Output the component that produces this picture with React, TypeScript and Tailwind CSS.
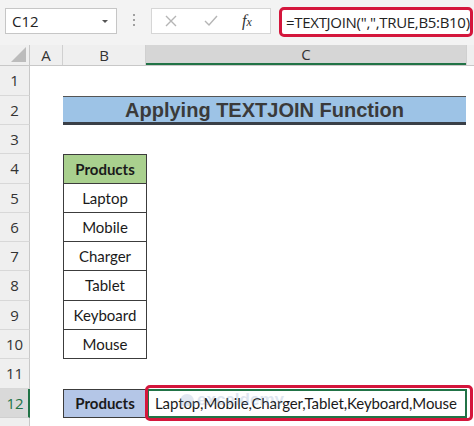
import React from "react";

const ROWS: { n: number; h: string }[] = [
  { n: 1, h: "h-[30px]" },
  { n: 2, h: "h-[29px]" },
  { n: 3, h: "h-[29px]" },
  { n: 4, h: "h-[30px]" },
  { n: 5, h: "h-[29px]" },
  { n: 6, h: "h-[29px]" },
  { n: 7, h: "h-[29px]" },
  { n: 8, h: "h-[30px]" },
  { n: 9, h: "h-[29px]" },
  { n: 10, h: "h-[29px]" },
  { n: 11, h: "h-[30px]" },
  { n: 12, h: "h-[29px]" },
];

const PRODUCTS: Record<number, string> = {
  5: "Laptop",
  6: "Mobile",
  7: "Charger",
  8: "Tablet",
  9: "Keyboard",
  10: "Mouse",
};

const cellFont = "font-['Lato','Open_Sans',sans-serif] text-[15px] text-[#1a1a1a]";

function RowHeader({ n }: { n?: number }) {
  const active = n === 12;
  return (
    <div
      className={
        active
          ? "w-[30px] shrink-0 flex items-center justify-center bg-[#d9d9d9] border-r-2 border-r-[#217346] border-b border-b-[#d0d0d0] text-[#217346] text-[15px] pl-[2px]"
          : "w-[30px] shrink-0 flex items-center justify-center bg-[#efefef] border-r border-r-[#c8c8c8] border-b border-b-[#d8d8d8] text-[#333] text-[15px]"
      }
    >
      {n}
    </div>
  );
}

function BodyRow({ n, h }: { n: number; h: string }) {
  let content: React.ReactNode = null;
  if (n === 2) {
    content = (
      <div className="w-[403px] h-full bg-[#9dc3e6] border-t border-t-[#555] border-b-[3px] border-b-[#3a3f47] flex items-center justify-center font-['Liberation_Sans',Arial,sans-serif] font-bold text-[20px] text-[#3a3a3a]">
        Applying TEXTJOIN Function
      </div>
    );
  } else if (n === 4) {
    content = (
      <div className={`w-[84px] h-full bg-[#a9d08e] border border-[#3c3c3c] flex items-center justify-center font-bold ${cellFont}`}>
        Products
      </div>
    );
  } else if (PRODUCTS[n]) {
    content = (
      <div className={`w-[84px] h-full border-x border-b border-[#3c3c3c] flex items-center justify-center ${cellFont}`}>
        {PRODUCTS[n]}
      </div>
    );
  } else if (n === 12) {
    content = (
      <>
        <div className={`w-[84px] h-full bg-[#b4c6e7] border border-[#3c3c3c] flex items-center justify-center font-bold ${cellFont}`}>
          Products
        </div>
        <div className={`w-[320px] h-full border-2 border-[#217346] flex items-center pl-[6px] ${cellFont} tracking-[-0.1px] whitespace-nowrap`}>
          Laptop,Mobile,Charger,Tablet,Keyboard,Mouse
        </div>
      </>
    );
  }
  return (
    <div className={`flex ${h}`}>
      <RowHeader n={n} />
      <div className="w-[33px] shrink-0" />
      <div className="flex items-stretch">{content}</div>
    </div>
  );
}

export default function App() {
  return (
    <div className="relative w-[474px] h-[426px] overflow-hidden bg-white font-['Open_Sans','Liberation_Sans',sans-serif]">
      {/* formula bar */}
      <div className="h-[45px] bg-[#f3f3f3] flex items-start pt-[8px]">
        <div className="ml-[5px] w-[112px] h-[26px] bg-white border border-[#c6c6c6] flex items-center justify-between pl-[6px] pr-[8px]">
          <span className="text-[15px] text-[#222]">C12</span>
          <span className="w-0 h-0 border-l-[3px] border-r-[3px] border-t-[3px] border-l-transparent border-r-transparent border-t-[#555]" />
        </div>
        <div className="ml-[16px] mt-[6px] flex flex-col gap-[3px]">
          <span className="w-[2px] h-[2px] bg-[#a0a0a0]" />
          <span className="w-[2px] h-[2px] bg-[#a0a0a0]" />
          <span className="w-[2px] h-[2px] bg-[#a0a0a0]" />
        </div>
        <div className="ml-[16px] w-[120px] h-[26px] bg-white border border-[#d6d6d6] flex items-center">
          <svg className="ml-[12px]" width="14" height="14" viewBox="0 0 14 14">
            <path d="M2 2 L12 12 M12 2 L2 12" stroke="#b5b5b5" strokeWidth="1.4" fill="none" />
          </svg>
          <svg className="ml-[26px]" width="14" height="12" viewBox="0 0 14 12">
            <path d="M1 6 L5 10 L13 1" stroke="#b5b5b5" strokeWidth="1.4" fill="none" />
          </svg>
          <span className="ml-[24px] font-['Liberation_Serif',serif] italic text-[16px] text-[#333]">
            f<span className="text-[12px]">x</span>
          </span>
        </div>
        <div className="ml-[8px] w-[194px] h-[30px] -mt-[1px] bg-white border-[3px] border-[#d4163c] rounded-[5px] flex items-center pl-[4px] whitespace-nowrap overflow-hidden">
          <span className="text-[15px] text-[#222] tracking-[-0.3px]">=TEXTJOIN(",",TRUE,B5:B10)</span>
        </div>
      </div>

      {/* column headers */}
      <div className="flex h-[21px] bg-[#efefef] border-b border-[#c8c8c8]">
        <div className="w-[30px] shrink-0 border-r border-[#c8c8c8] flex items-end justify-end pr-[3px] pb-[3px]">
          <svg width="15" height="15" viewBox="0 0 15 15">
            <path d="M15 0 L15 15 L0 15 Z" fill="#bcbcbc" />
          </svg>
        </div>
        <div className="w-[33px] border-r border-[#d0d0d0] flex items-center justify-center text-[15px] text-[#333]">A</div>
        <div className="w-[83px] border-r border-[#d0d0d0] flex items-center justify-center text-[15px] text-[#333]">B</div>
        <div className="w-[320px] bg-[#d6d6d6] border-b-2 border-[#217346] flex items-center justify-center text-[15px] text-[#333]">C</div>
        <div className="flex-1 border-l border-[#d0d0d0]" />
      </div>

      {/* rows */}
      <div className="flex flex-col">
        {ROWS.map((r) => (
          <BodyRow key={r.n} n={r.n} h={r.h} />
        ))}
        <div className="flex h-[29px]">
          <RowHeader />
        </div>
      </div>

      {/* watermark */}
      <div className="absolute left-[180px] top-[391px] flex items-center gap-[3px] opacity-25 pointer-events-none">
        <span className="w-[14px] h-[12px] rounded-t-full bg-[#8aa4c8]" />
        <span className="font-['Liberation_Sans',Arial,sans-serif] font-bold text-[17px] text-[#7f9cc4] leading-none">exceldemy</span>
      </div>

      {/* red annotation around C12 */}
      <div className="absolute left-[145px] top-[385px] w-[328px] h-[36px] border-[3px] border-[#d4163c] rounded-[5px] pointer-events-none" />
    </div>
  );
}
